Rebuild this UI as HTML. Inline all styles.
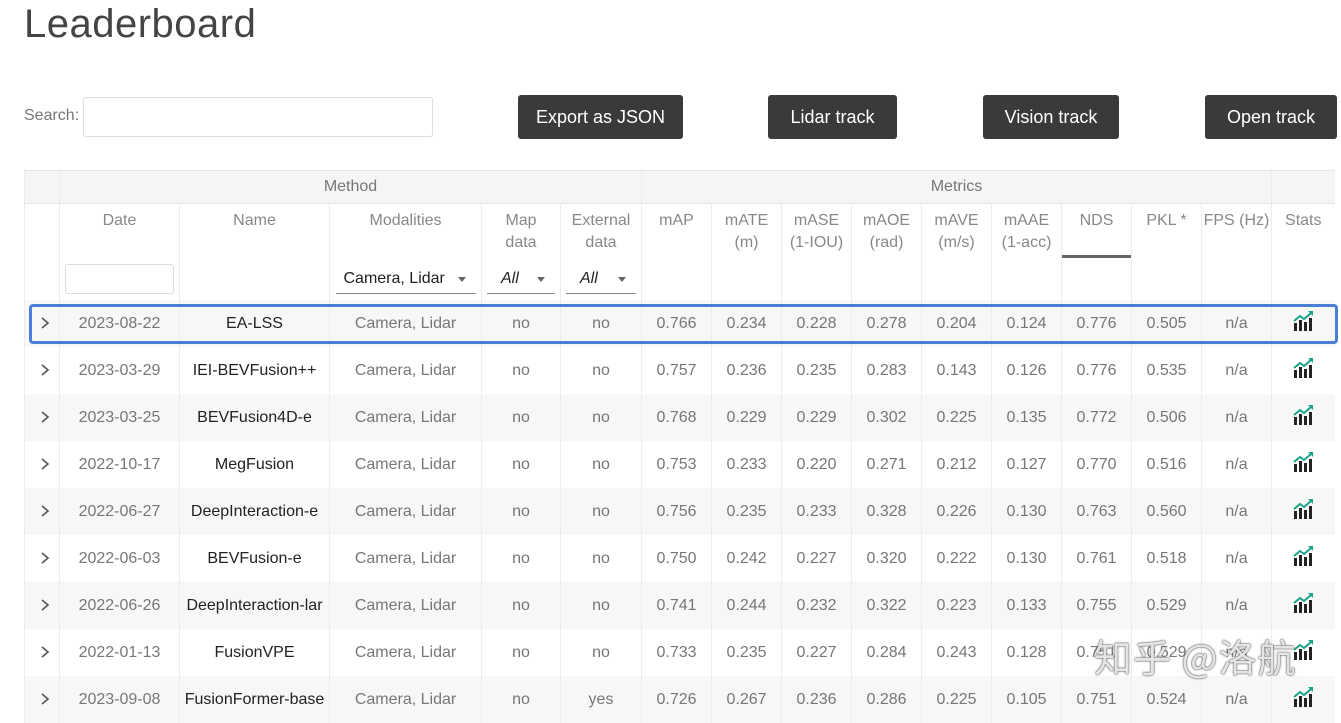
<!DOCTYPE html>
<html><head><meta charset="utf-8"><style>
body{margin:0;width:1341px;height:711px;overflow:hidden;background:#fff;font-family:"Liberation Sans",sans-serif;color:#666;position:relative}
h1{position:absolute;left:24px;top:2px;margin:0;font-weight:normal;font-size:40px;color:#444;letter-spacing:0.5px}
.lbl{position:absolute;left:24px;top:107px;font-size:16px;color:#777}
.search{position:absolute;left:83px;top:97px;width:348px;height:38px;border:1px solid #ddd;border-radius:3px}
.btn{position:absolute;top:95px;height:44px;background:#3a3a3a;color:#fff;font-size:18px;line-height:44px;text-align:center;border-radius:3px}
table{position:absolute;left:24px;top:170px;border-collapse:collapse;table-layout:fixed;font-size:16px}
td,th{padding:0;text-align:center;border-left:1px solid #ececec;font-weight:normal;overflow:hidden;white-space:nowrap}
tr.g th{height:32px;background:#f5f5f5;color:#777;border-top:1px solid #e6e6e6;border-bottom:1px solid #e6e6e6}
tr.h th{height:54px;vertical-align:top;padding-top:6px;box-sizing:border-box;color:#888;line-height:22px;white-space:normal}
tr.f td{height:43px;vertical-align:middle}
tr.d td{height:47px;color:#777}
tr.d:nth-child(odd) td{background:#f7f7f7}
tr.d td.n{color:#222}
.sel{display:inline-block;border-bottom:1px solid #888;height:30px;line-height:30px;text-align:left;padding-left:8px;box-sizing:border-box;color:#222;position:relative}
.sel:after{content:"";position:absolute;right:10px;top:13px;border:4px solid transparent;border-top:5px solid #666}
.hl{position:absolute;left:29px;top:304px;width:1303px;height:34px;border:3px solid #4a7fd6;border-radius:4px}
.wm{position:absolute;left:1094px;top:628px;font-family:"Noto Sans CJK SC",sans-serif;font-size:38px;color:rgba(255,255,255,.85);text-shadow:0 0 2px #555,0 0 1px #333;letter-spacing:1px}
</style></head><body>
<h1>Leaderboard</h1>
<div class="lbl">Search:</div><div class="search"></div>
<div class="btn" style="left:518px;width:165px">Export as JSON</div>
<div class="btn" style="left:768px;width:129px">Lidar track</div>
<div class="btn" style="left:983px;width:136px">Vision track</div>
<div class="btn" style="left:1205px;width:132px">Open track</div>
<table>
<colgroup><col style="width:35px"><col style="width:120px"><col style="width:150px"><col style="width:152px"><col style="width:79px"><col style="width:81px"><col style="width:70px"><col style="width:70px"><col style="width:70px"><col style="width:70px"><col style="width:70px"><col style="width:70px"><col style="width:70px"><col style="width:70px"><col style="width:70px"><col style="width:63px"></colgroup>
<tr class="g"><th></th><th colspan="5">Method</th><th colspan="9">Metrics</th><th></th></tr>
<tr class="h"><th></th><th>Date</th><th>Name</th><th>Modalities</th><th>Map<br>data</th><th>External<br>data</th><th>mAP</th><th>mATE<br>(m)</th><th>mASE<br>(1-IOU)</th><th>mAOE<br>(rad)</th><th>mAVE<br>(m/s)</th><th>mAAE<br>(1-acc)</th><th style="box-shadow:inset 0 -3px 0 #666">NDS</th><th>PKL *</th><th>FPS (Hz)</th><th>Stats</th></tr>
<tr class="f"><td></td><td><div style="width:107px;height:28px;border:1px solid #ddd;border-radius:3px;margin:0 auto 0 5px"></div></td><td></td><td><span class="sel" style="width:140px">Camera, Lidar</span></td><td><span class="sel" style="width:68px;font-style:italic;padding-left:14px">All</span></td><td><span class="sel" style="width:70px;font-style:italic;padding-left:14px">All</span></td><td></td><td></td><td></td><td></td><td></td><td></td><td></td><td></td><td></td><td></td></tr>
</table>
<table style="top:300px">
<colgroup><col style="width:35px"><col style="width:120px"><col style="width:150px"><col style="width:152px"><col style="width:79px"><col style="width:81px"><col style="width:70px"><col style="width:70px"><col style="width:70px"><col style="width:70px"><col style="width:70px"><col style="width:70px"><col style="width:70px"><col style="width:70px"><col style="width:70px"><col style="width:63px"></colgroup>
<tr class="d"><td>›</td><td>2023-08-22</td><td class="n">EA-LSS</td><td>Camera, Lidar</td><td>no</td><td>no</td><td>0.766</td><td>0.234</td><td>0.228</td><td>0.278</td><td>0.204</td><td>0.124</td><td>0.776</td><td>0.505</td><td>n/a</td><td>IC</td></tr>
<tr class="d"><td>›</td><td>2023-03-29</td><td class="n">IEI-BEVFusion++</td><td>Camera, Lidar</td><td>no</td><td>no</td><td>0.757</td><td>0.236</td><td>0.235</td><td>0.283</td><td>0.143</td><td>0.126</td><td>0.776</td><td>0.535</td><td>n/a</td><td>IC</td></tr>
<tr class="d"><td>›</td><td>2023-03-25</td><td class="n">BEVFusion4D-e</td><td>Camera, Lidar</td><td>no</td><td>no</td><td>0.768</td><td>0.229</td><td>0.229</td><td>0.302</td><td>0.225</td><td>0.135</td><td>0.772</td><td>0.506</td><td>n/a</td><td>IC</td></tr>
<tr class="d"><td>›</td><td>2022-10-17</td><td class="n">MegFusion</td><td>Camera, Lidar</td><td>no</td><td>no</td><td>0.753</td><td>0.233</td><td>0.220</td><td>0.271</td><td>0.212</td><td>0.127</td><td>0.770</td><td>0.516</td><td>n/a</td><td>IC</td></tr>
<tr class="d"><td>›</td><td>2022-06-27</td><td class="n">DeepInteraction-e</td><td>Camera, Lidar</td><td>no</td><td>no</td><td>0.756</td><td>0.235</td><td>0.233</td><td>0.328</td><td>0.226</td><td>0.130</td><td>0.763</td><td>0.560</td><td>n/a</td><td>IC</td></tr>
<tr class="d"><td>›</td><td>2022-06-03</td><td class="n">BEVFusion-e</td><td>Camera, Lidar</td><td>no</td><td>no</td><td>0.750</td><td>0.242</td><td>0.227</td><td>0.320</td><td>0.222</td><td>0.130</td><td>0.761</td><td>0.518</td><td>n/a</td><td>IC</td></tr>
<tr class="d"><td>›</td><td>2022-06-26</td><td class="n">DeepInteraction-lar</td><td>Camera, Lidar</td><td>no</td><td>no</td><td>0.741</td><td>0.244</td><td>0.232</td><td>0.322</td><td>0.223</td><td>0.133</td><td>0.755</td><td>0.529</td><td>n/a</td><td>IC</td></tr>
<tr class="d"><td>›</td><td>2022-01-13</td><td class="n">FusionVPE</td><td>Camera, Lidar</td><td>no</td><td>no</td><td>0.733</td><td>0.235</td><td>0.227</td><td>0.284</td><td>0.243</td><td>0.128</td><td>0.751</td><td>0.529</td><td>n/a</td><td>IC</td></tr>
<tr class="d"><td>›</td><td>2023-09-08</td><td class="n">FusionFormer-base</td><td>Camera, Lidar</td><td>no</td><td>yes</td><td>0.726</td><td>0.267</td><td>0.236</td><td>0.286</td><td>0.225</td><td>0.105</td><td>0.751</td><td>0.524</td><td>n/a</td><td>IC</td></tr>
</table>
<div class="hl"></div>
<div class="wm">知乎 @洛航</div>
<script>
var ic='<svg width="22" height="22" viewBox="0 0 22 22"><path d="M2 11 L8 6 L12 9 L19 3" fill="none" stroke="#1aa38a" stroke-width="2"/><path d="M16 1 L21 1 L21 6Z" fill="#1aa38a"/><rect x="2" y="13" width="3" height="8" fill="#222"/><rect x="7" y="10" width="3" height="11" fill="#222"/><rect x="12" y="12" width="3" height="9" fill="#222"/><rect x="17" y="8" width="3" height="13" fill="#222"/></svg>';
var ch='<svg width="12" height="14" viewBox="0 0 12 14" style="vertical-align:middle"><path d="M3 2 L9 7 L3 12" fill="none" stroke="#555" stroke-width="1.6"/></svg>';
document.querySelectorAll('tr.d td:last-child').forEach(function(t){t.innerHTML=ic;});
document.querySelectorAll('tr.d td:first-child').forEach(function(t){t.innerHTML=ch;t.style.paddingLeft='6px';});
</script>
</body></html>
